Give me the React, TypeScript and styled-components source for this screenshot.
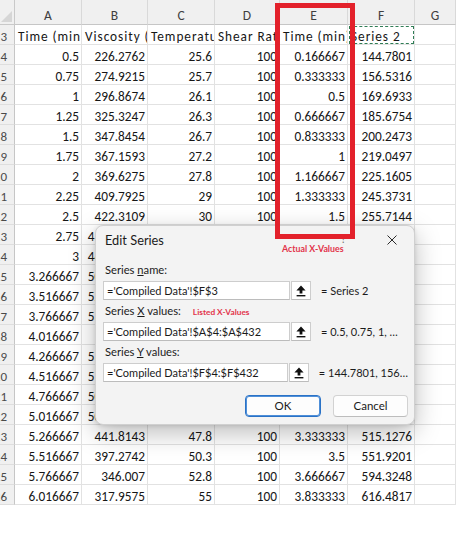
import React from "react";
import styled, { createGlobalStyle, css } from "styled-components";

const GlobalStyle = createGlobalStyle`
  html, body { margin: 0; padding: 0; background: #ffffff; }
  body { font-family: Lato, "Open Sans", sans-serif; }
`;

const COLS = [15, 67, 66, 67, 65, 68, 67, 41];
const LETTERS = ["A", "B", "C", "D", "E", "F", "G"];

type Row = [number, string, string, string, string, string, string];

const ROWS: Row[] = [
  [3, "Time (min)", "Viscosity (cP)", "Temperature", "Shear Rate", "Time (min)", "Series 2"],
  [4, "0.5", "226.2762", "25.6", "100", "0.166667", "144.7801"],
  [5, "0.75", "274.9215", "25.7", "100", "0.333333", "156.5316"],
  [6, "1", "296.8674", "26.1", "100", "0.5", "169.6933"],
  [7, "1.25", "325.3247", "26.3", "100", "0.666667", "185.6754"],
  [8, "1.5", "347.8454", "26.7", "100", "0.833333", "200.2473"],
  [9, "1.75", "367.1593", "27.2", "100", "1", "219.0497"],
  [10, "2", "369.6275", "27.8", "100", "1.166667", "225.1605"],
  [11, "2.25", "409.7925", "29", "100", "1.333333", "245.3731"],
  [12, "2.5", "422.3109", "30", "100", "1.5", "255.7144"],
  [13, "2.75", "436.55214", "31.2", "100", "1.666667", "270.1182"],
  [14, "3", "448.01327", "32.5", "100", "1.833333", "288.4409"],
  [15, "3.266667", "502.33768", "33.8", "100", "2", "301.7725"],
  [16, "3.516667", "521.88935", "35.1", "100", "2.166667", "322.0598"],
  [17, "3.766667", "536.22013", "36.4", "100", "2.333333", "340.6671"],
  [18, "4.016667", "587.412", "37.7", "100", "2.5", "359.3304"],
  [19, "4.266667", "531.44061", "39.6", "100", "2.666667", "381.9012"],
  [20, "4.516667", "512.99836", "41.5", "100", "2.833333", "405.5527"],
  [21, "4.766667", "501.04587", "43.4", "100", "3", "437.2216"],
  [22, "5.016667", "500.31275", "45.6", "100", "3.166667", "474.8902"],
  [23, "5.266667", "441.8143", "47.8", "100", "3.333333", "515.1276"],
  [24, "5.516667", "397.2742", "50.3", "100", "3.5", "551.9201"],
  [25, "5.766667", "346.007", "52.8", "100", "3.666667", "594.3248"],
  [26, "6.016667", "317.9575", "55", "100", "3.833333", "616.4817"],
];

const Page = styled.div`
  width: 474px;
  height: 548px;
  background: #ffffff;
`;

const Viewport = styled.div`
  position: relative;
  width: 456px;
  height: 507px;
  overflow: hidden;
  background: #ffffff;
`;

const Grid = styled.div`
  display: grid;
  grid-template-columns: ${COLS.map((c) => `${c}px`).join(" ")};
  grid-template-rows: 25px repeat(${ROWS.length}, 20px);
  font-family: Calibri, Lato, "Open Sans", sans-serif;
`;

const Corner = styled.div`
  box-sizing: border-box;
  background: #f0f0f0;
  border-right: 1px solid #c9c9c9;
  border-bottom: 1px solid #c9c9c9;
  display: flex;
  justify-content: flex-end;
  align-items: flex-end;
  padding: 0 2px 2px 0;
`;

const CornerTriangle = styled.div`
  width: 11px;
  height: 11px;
  background: #d6d6d6;
  clip-path: polygon(100% 0, 100% 100%, 0 100%);
`;

const ColHeader = styled.div`
  box-sizing: border-box;
  background: #f0f0f0;
  border-right: 1px solid #d9d9d9;
  border-bottom: 1px solid #c6c6c6;
  color: #3f3f3f;
  font-size: 13.5px;
  line-height: 13px;
  padding-top: 9px;
  text-align: center;
  overflow: hidden;
`;

const RowHeader = styled.div`
  box-sizing: border-box;
  background: #f0f0f0;
  border-right: 1px solid #c6c6c6;
  border-bottom: 1px solid #dedede;
  color: #4a4a4a;
  font-size: 13px;
  line-height: 13px;
  padding: 5px 7px 0 0;
  display: flex;
  justify-content: flex-end;
  overflow: hidden;
  white-space: nowrap;
`;

const Cell = styled.div<{ $align: "left" | "right"; $marquee?: boolean }>`
  box-sizing: border-box;
  display: flex;
  justify-content: ${(p) => (p.$align === "right" ? "flex-end" : "flex-start")};
  border-right: 1px solid #e2e2e2;
  border-bottom: 1px solid #e2e2e2;
  color: #161616;
  font-size: 13.3px;
  line-height: 13px;
  padding: 5px 2px 0 3px;
  white-space: nowrap;
  overflow: hidden;
  ${(p) =>
    p.$align === "left" &&
    css`
      letter-spacing: 0.95px;
    `}
  ${(p) =>
    p.$marquee &&
    css`
      outline: 1px dashed #2f7d55;
      outline-offset: -2px;
    `}
`;

const Annotation = styled.div`
  position: absolute;
  left: 275px;
  top: 3px;
  width: 80px;
  height: 236px;
  box-sizing: border-box;
  border: 5px solid #e3212b;
  z-index: 3;
  pointer-events: none;
`;

const AnnotationNote = styled.div`
  position: absolute;
  left: 282px;
  top: 243px;
  z-index: 3;
  font-family: Lato, "Open Sans", sans-serif;
  font-weight: 700;
  font-size: 8.8px;
  line-height: 11px;
  color: #e2334a;
  white-space: nowrap;
`;

const Dialog = styled.div`
  position: absolute;
  left: 95px;
  top: 225px;
  width: 320px;
  height: 200px;
  box-sizing: border-box;
  z-index: 2;
  background: #f3f3f3;
  border: 1px solid #d0d0d0;
  border-radius: 8px;
  box-shadow: 0 8px 26px rgba(0, 0, 0, 0.26), 0 1px 4px rgba(0, 0, 0, 0.12);
  display: flex;
  flex-direction: column;
  padding: 0 6px 7px 7px;
  font-family: "Segoe UI", Lato, "Open Sans", sans-serif;
  color: #1b1b1b;
`;

const TitleBar = styled.div`
  height: 37px;
  box-sizing: border-box;
  padding: 7px 11px 0 2px;
  display: flex;
  align-items: flex-start;
`;

const Title = styled.div`
  flex: 1;
  font-size: 12.8px;
  line-height: 15px;
`;

const Help = styled.div`
  font-size: 11px;
  line-height: 11px;
  color: #777777;
`;

const CloseButton = styled.div`
  margin-left: 41px;
  margin-top: 2px;
  width: 10px;
  height: 10px;
  display: flex;
`;

const Fields = styled.div`
  display: flex;
  flex-direction: column;
  gap: 4px;
`;

const FieldGroup = styled.div`
  display: flex;
  flex-direction: column;
  gap: 4px;
`;

const LabelRow = styled.div`
  display: flex;
  align-items: baseline;
  padding-left: 2px;
  font-size: 11.2px;
  line-height: 14px;
  height: 14px;
`;

const Accel = styled.span`
  text-decoration: underline;
  text-underline-offset: 1px;
`;

const ListedNote = styled.span`
  margin-left: 12px;
  font-weight: 700;
  font-size: 8.3px;
  color: #e2334a;
`;

const InputRow = styled.div`
  display: flex;
  align-items: center;
  height: 19px;
`;

const TextBox = styled.div`
  box-sizing: border-box;
  width: 187px;
  height: 19px;
  background: #ffffff;
  border: 1px solid #cdcdcd;
  border-bottom-color: #bcbcbc;
  font-size: 11px;
  line-height: 17px;
  padding-left: 3px;
  color: #1a1a1a;
  white-space: nowrap;
  overflow: hidden;
`;

const CollapseButton = styled.div`
  box-sizing: border-box;
  width: 20px;
  height: 19px;
  margin-left: 1px;
  background: #ffffff;
  border: 1px solid #cdcdcd;
  border-bottom-color: #bcbcbc;
  display: flex;
  align-items: center;
  justify-content: center;
`;

const Result = styled.div`
  margin-left: 10px;
  font-size: 11px;
  line-height: 14px;
  white-space: nowrap;
`;

const ButtonRow = styled.div`
  margin-top: auto;
  display: flex;
  justify-content: flex-end;
  gap: 12px;
`;

const DialogButton = styled.div<{ $primary?: boolean; $w: number }>`
  box-sizing: border-box;
  width: ${(p) => p.$w}px;
  height: 22px;
  border-radius: 4px;
  background: #fdfdfd;
  border: 1px solid #d2d2d2;
  border-bottom-color: #bdbdbd;
  font-size: 11.5px;
  line-height: 20px;
  text-align: center;
  color: #1a1a1a;
  ${(p) =>
    p.$primary &&
    css`
      border: 1px solid #2a72c6;
      box-shadow: inset 0 0 0 1px #4f8fd8;
    `}
`;

const CollapseIcon = () => (
  <svg width="10" height="12" viewBox="0 0 10 12">
    <path d="M5 0.6 L9.6 5.4 H6.4 V8.6 H3.6 V5.4 H0.4 Z" fill="#111" />
    <rect x="0.6" y="10" width="8.8" height="1.4" fill="#111" />
  </svg>
);

const CloseIcon = () => (
  <svg width="10" height="10" viewBox="0 0 10 10">
    <path d="M0.5 0.5 L9.5 9.5 M9.5 0.5 L0.5 9.5" stroke="#2a2a2a" strokeWidth="1" fill="none" />
  </svg>
);

const fields = [
  {
    label: (
      <>
        Series <Accel>n</Accel>ame:
      </>
    ),
    value: "='Compiled Data'!$F$3",
    result: "= Series 2",
    note: null as string | null,
  },
  {
    label: (
      <>
        Series <Accel>X</Accel> values:
      </>
    ),
    value: "='Compiled Data'!$A$4:$A$432",
    result: "= 0.5, 0.75, 1, \u2026",
    note: "Listed X-Values",
  },
  {
    label: (
      <>
        Series <Accel>Y</Accel> values:
      </>
    ),
    value: "='Compiled Data'!$F$4:$F$432",
    result: "= 144.7801, 156\u2026",
    note: null,
  },
];

export default function App() {
  return (
    <Page>
      <GlobalStyle />
      <Viewport>
        <Grid>
          <Corner>
            <CornerTriangle />
          </Corner>
          {LETTERS.map((l) => (
            <ColHeader key={l}>{l}</ColHeader>
          ))}
          {ROWS.map((row) => {
            const [num, ...vals] = row;
            const isText = num === 3;
            return (
              <React.Fragment key={num}>
                <RowHeader>
                  <span>{num}</span>
                </RowHeader>
                {vals.map((v, i) => (
                  <Cell key={i} $align={isText ? "left" : "right"} $marquee={isText && i === 5}>
                    <span>{v}</span>
                  </Cell>
                ))}
                <Cell $align="left" />
              </React.Fragment>
            );
          })}
        </Grid>

        <Annotation />
        <AnnotationNote>Actual X-Values</AnnotationNote>

        <Dialog>
          <TitleBar>
            <Title>Edit Series</Title>
            <Help>?</Help>
            <CloseButton>
              <CloseIcon />
            </CloseButton>
          </TitleBar>
          <Fields>
            {fields.map((f, i) => (
              <FieldGroup key={i}>
                <LabelRow>
                  <span>{f.label}</span>
                  {f.note && <ListedNote>{f.note}</ListedNote>}
                </LabelRow>
                <InputRow>
                  <TextBox>{f.value}</TextBox>
                  <CollapseButton>
                    <CollapseIcon />
                  </CollapseButton>
                  <Result>{f.result}</Result>
                </InputRow>
              </FieldGroup>
            ))}
          </Fields>
          <ButtonRow>
            <DialogButton $primary $w={76}>
              OK
            </DialogButton>
            <DialogButton $w={75}>Cancel</DialogButton>
          </ButtonRow>
        </Dialog>
      </Viewport>
    </Page>
  );
}
